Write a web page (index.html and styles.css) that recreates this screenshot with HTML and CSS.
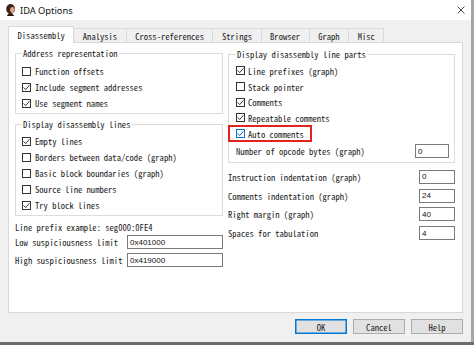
FILE: index.html
```html
<!DOCTYPE html>
<html>
<head>
<meta charset="utf-8">
<title>IDA Options</title>
<link rel="stylesheet" href="styles.css">
</head>
<body>
<div class="window">
  <div class="titlebar">
    <svg class="appicon" viewBox="0 0 10 12" width="10" height="12">
      <ellipse cx="4.6" cy="5" rx="4.4" ry="5" fill="#3d2216"/>
      <ellipse cx="6.4" cy="6" rx="2.3" ry="3" fill="#d9a88a"/>
      <path d="M1 12 C2 9.2 4 8.6 6 9.4 L8.4 12 Z" fill="#2b1a12"/>
    </svg>
    <span class="title">IDA Options</span>
    <svg class="close" viewBox="0 0 8 8" width="8" height="8">
      <path d="M0.5 0.5 L7.5 7.5 M7.5 0.5 L0.5 7.5"/>
    </svg>
  </div>
  <div class="client">
    <div class="tabs">
      <div class="tab active">Disassembly</div>
      <div class="tab">Analysis</div>
      <div class="tab">Cross-references</div>
      <div class="tab">Strings</div>
      <div class="tab">Browser</div>
      <div class="tab">Graph</div>
      <div class="tab">Misc</div>
    </div>
    <div class="page">
      <div class="col">
        <fieldset class="group g-addr">
          <legend>Address representation</legend>
          <div class="check"><svg class="cb" viewBox="0 0 9 9"><rect x="0.5" y="0.5" width="8" height="8"/></svg><span>Function offsets</span></div>
          <div class="check"><svg class="cb" viewBox="0 0 9 9"><rect x="0.5" y="0.5" width="8" height="8"/><path d="M1.7 4.5 L3.7 6.6 L7.4 2.2"/></svg><span>Include segment addresses</span></div>
          <div class="check"><svg class="cb" viewBox="0 0 9 9"><rect x="0.5" y="0.5" width="8" height="8"/><path d="M1.7 4.5 L3.7 6.6 L7.4 2.2"/></svg><span>Use segment names</span></div>
        </fieldset>
        <fieldset class="group g-lines">
          <legend>Display disassembly lines</legend>
          <div class="check"><svg class="cb" viewBox="0 0 9 9"><rect x="0.5" y="0.5" width="8" height="8"/><path d="M1.7 4.5 L3.7 6.6 L7.4 2.2"/></svg><span>Empty lines</span></div>
          <div class="check"><svg class="cb" viewBox="0 0 9 9"><rect x="0.5" y="0.5" width="8" height="8"/></svg><span>Borders between data/code (graph)</span></div>
          <div class="check"><svg class="cb" viewBox="0 0 9 9"><rect x="0.5" y="0.5" width="8" height="8"/></svg><span>Basic block boundaries (graph)</span></div>
          <div class="check"><svg class="cb" viewBox="0 0 9 9"><rect x="0.5" y="0.5" width="8" height="8"/></svg><span>Source line numbers</span></div>
          <div class="check"><svg class="cb" viewBox="0 0 9 9"><rect x="0.5" y="0.5" width="8" height="8"/><path d="M1.7 4.5 L3.7 6.6 L7.4 2.2"/></svg><span>Try block lines</span></div>
        </fieldset>
        <div class="prefix">Line prefix example: seg000:0FE4</div>
        <div class="limits">
          <div class="field"><span class="label">Low suspiciousness limit</span><div class="edit wide">0x401000</div></div>
          <div class="field"><span class="label">High suspiciousness limit</span><div class="edit wide">0x419000</div></div>
        </div>
      </div>
      <div class="col">
        <fieldset class="group g-parts">
          <legend>Display disassembly line parts</legend>
          <div class="check"><svg class="cb" viewBox="0 0 9 9"><rect x="0.5" y="0.5" width="8" height="8"/><path d="M1.7 4.5 L3.7 6.6 L7.4 2.2"/></svg><span>Line prefixes (graph)</span></div>
          <div class="check"><svg class="cb" viewBox="0 0 9 9"><rect x="0.5" y="0.5" width="8" height="8"/></svg><span>Stack pointer</span></div>
          <div class="check"><svg class="cb" viewBox="0 0 9 9"><rect x="0.5" y="0.5" width="8" height="8"/><path d="M1.7 4.5 L3.7 6.6 L7.4 2.2"/></svg><span>Comments</span></div>
          <div class="check"><svg class="cb" viewBox="0 0 9 9"><rect x="0.5" y="0.5" width="8" height="8"/><path d="M1.7 4.5 L3.7 6.6 L7.4 2.2"/></svg><span>Repeatable comments</span></div>
          <div class="check marked"><svg class="cb focus" viewBox="0 0 9 9"><rect x="0.5" y="0.5" width="8" height="8"/><path d="M1.7 4.5 L3.7 6.6 L7.4 2.2"/></svg><span>Auto comments</span><span class="highlight"></span></div>
          <div class="field opcode"><span class="label">Number of opcode bytes (graph)</span><div class="edit small">0</div></div>
        </fieldset>
        <div class="fields">
          <div class="field"><span class="label">Instruction indentation (graph)</span><div class="edit num">0</div></div>
          <div class="field"><span class="label">Comments indentation (graph)</span><div class="edit num">24</div></div>
          <div class="field"><span class="label">Right margin (graph)</span><div class="edit num">40</div></div>
          <div class="field"><span class="label">Spaces for tabulation</span><div class="edit num">4</div></div>
        </div>
      </div>
    </div>
    <div class="buttons">
      <div class="btn default">OK</div>
      <div class="btn">Cancel</div>
      <div class="btn">Help</div>
    </div>
  </div>
</div>
<div class="taskbar"></div>
</body>
</html>
```

FILE: styles.css
```css
html, body {
  margin: 0;
  padding: 0;
}

body {
  width: 474px;
  height: 345px;
  overflow: hidden;
  background: #f0f0f0;
  display: flex;
  flex-direction: column;
}

.window {
  flex: 1;
  display: flex;
  flex-direction: column;
  border-right: 3px solid #a4a4a4;
  background: #f0f0f0;
  min-height: 0;
}

.titlebar {
  height: 20px;
  background: #ffffff;
  display: flex;
  align-items: center;
}

.appicon {
  margin-left: 6px;
  display: block;
}

.title {
  margin-left: 4px;
  font-family: "Noto Sans", "Open Sans", sans-serif;
  font-size: 9.3px;
  color: #111;
}

.close {
  margin-left: auto;
  margin-right: 6px;
  display: block;
}

.close path {
  stroke: #333;
  stroke-width: 0.9;
  fill: none;
}

.client {
  display: flex;
  flex-direction: column;
  font-family: "Noto Sans Mono CJK SC", "DejaVu Sans Mono", monospace;
  font-size: 8.6px;
  color: #222;
}

.tabs {
  margin-top: 6px;
  margin-left: 8px;
  height: 16px;
  display: flex;
  align-items: flex-end;
}

.tab {
  height: 14px;
  box-sizing: border-box;
  padding: 0 8.5px;
  border: 1px solid #d9d9d9;
  border-bottom: none;
  background: #f0f0f0;
  display: flex;
  align-items: center;
  margin-left: -1px;
  white-space: nowrap;
}

.tab:first-child {
  margin-left: 0;
}

.tab.active {
  height: 17px;
  background: #ffffff;
  margin-bottom: -1px;
  position: relative;
  z-index: 1;
}

.page {
  margin-left: 8px;
  width: 455px;
  height: 271px;
  box-sizing: border-box;
  background: #ffffff;
  border: 1px solid #d9d9d9;
  padding: 0 7px 0 6px;
  display: grid;
  grid-template-columns: 208px 227px;
  column-gap: 5px;
  align-items: start;
}

.col {
  display: flex;
  flex-direction: column;
}

.group {
  margin: 0;
  border: 1px solid #dcdcdc;
  min-width: 0;
}

.group legend {
  padding: 0 1px;
  height: 10px;
  line-height: 10px;
}

.g-addr {
  margin-top: 5px;
  padding: 5px 6px 2px 6px;
}

.g-lines {
  margin-top: 5px;
  padding: 4px 6px 2px 6px;
}

.g-parts {
  margin-top: 6px;
  padding: 4px 5px 4px 7px;
}

.check {
  height: 16px;
  display: flex;
  align-items: center;
  gap: 4px;
  white-space: nowrap;
}

.g-parts .check {
  height: 15.7px;
  gap: 3px;
}

.cb {
  width: 9px;
  height: 9px;
  display: block;
  flex: none;
}

.cb rect {
  fill: #ffffff;
  stroke: #333333;
  stroke-width: 1;
}

.cb path {
  fill: none;
  stroke: #333333;
  stroke-width: 1;
}

.cb.focus rect {
  stroke: #0078d7;
}

.cb.focus path {
  stroke: #1a5fa8;
}

.marked {
  position: relative;
}

.highlight {
  position: absolute;
  left: -8px;
  top: -1px;
  width: 84px;
  height: 17px;
  box-sizing: border-box;
  border: 2px solid #e4231f;
}

.prefix {
  margin-top: 3px;
  height: 16px;
  display: flex;
  align-items: center;
  white-space: nowrap;
}

.limits {
  display: flex;
  flex-direction: column;
  gap: 4px;
}

.field {
  height: 14px;
  display: flex;
  align-items: center;
  white-space: nowrap;
}

.field .label {
  flex: 1;
}

.opcode {
  margin-top: 3px;
}

.fields {
  margin-top: 6.5px;
  display: flex;
  flex-direction: column;
  gap: 4.7px;
}

.edit {
  height: 14px;
  box-sizing: border-box;
  border: 1px solid #7a7a7a;
  background: #ffffff;
  padding: 0 2px;
  font-family: "Liberation Sans", Arial, sans-serif;
  font-size: 8px;
  color: #111;
  display: flex;
  align-items: center;
}

.edit.wide {
  width: 96px;
}

.edit.small {
  width: 34px;
}

.edit.num {
  width: 36px;
}

.buttons {
  margin-top: 6px;
  padding-right: 8px;
  display: flex;
  justify-content: flex-end;
  gap: 6px;
}

.btn {
  width: 52px;
  height: 15px;
  box-sizing: border-box;
  border: 1px solid #adadad;
  background: #e1e1e1;
  display: flex;
  align-items: center;
  justify-content: center;
}

.btn.default {
  border-color: #0078d7;
  box-shadow: inset 0 0 0 0.5px #0078d7;
}

.taskbar {
  height: 3px;
  background: #6c6c6c;
  flex: none;
}
```
